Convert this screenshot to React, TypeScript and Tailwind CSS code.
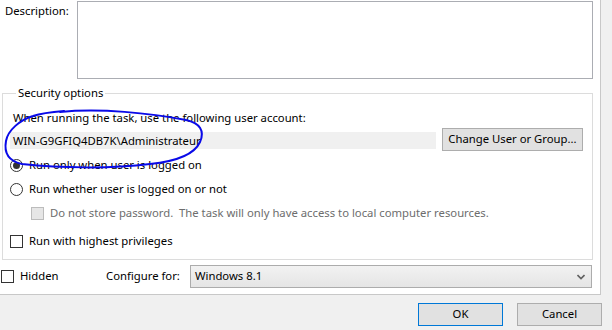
import React from "react";

const font = { fontFamily: '"Noto Sans", "Open Sans", sans-serif' };

const Checkbox = ({ disabled = false }: { disabled?: boolean }) => (
  <div
    className={
      disabled
        ? "w-[13px] h-[13px] shrink-0 border border-[#bcbcbc] bg-[#e6e6e6]"
        : "w-[13px] h-[13px] shrink-0 border border-[#333333] bg-white"
    }
  />
);

const Radio = ({ checked = false }: { checked?: boolean }) => (
  <div className="w-[13px] h-[13px] shrink-0 rounded-full border border-[#333333] bg-white flex items-center justify-center">
    {checked && <div className="w-[7px] h-[7px] rounded-full bg-[#333333]" />}
  </div>
);

export default function App() {
  return (
    <div
      className="w-[612px] h-[330px] bg-[#f0f0f0] flex flex-col text-[11.3px] text-black overflow-hidden"
      style={font}
    >
      {/* Main white panel */}
      <div className="relative w-[601px] h-[295px] bg-white border-r border-b border-[#c8c8c8] flex flex-col">
        {/* Description row */}
        <div className="flex">
          <div className="w-[77px] pl-[5px] pt-[3px] leading-[16px]">Description:</div>
          <div className="w-[516px] h-[78px] mt-[1px] border border-[#abadb3] bg-white" />
        </div>

        {/* Security options group */}
        <fieldset className="ml-[2px] mt-[6px] w-[591px] border border-[#dcdcdc] px-[7px] pb-[10px]">
          <legend className="ml-[6px] px-[2px] leading-[16px]">Security options</legend>

          <div className="mt-[9px] h-[16px] leading-[16px] pl-[3px]">
            When running the task, use the following user account:
          </div>

          <div className="mt-[2px] flex gap-[6px]">
            <div className="w-[426px] h-[17px] mt-[4px] bg-[#f0f0f0] pl-[3px] leading-[17px]">
              WIN-G9GFIQ4DB7K\Administrateur
            </div>
            <div className="w-[141px] h-[23px] border border-[#adadad] bg-[#e1e1e1] flex items-center justify-center">
              Change User or Group...
            </div>
          </div>

          <div className="mt-[6px] h-[16px] flex items-center gap-[6px]">
            <Radio checked />
            <span>Run only when user is logged on</span>
          </div>

          <div className="mt-[8px] h-[16px] flex items-center gap-[6px]">
            <Radio />
            <span>Run whether user is logged on or not</span>
          </div>

          <div className="mt-[8px] h-[16px] flex items-center gap-[6px] pl-[21px] text-[#6d6d6d]">
            <Checkbox disabled />
            <span className="whitespace-pre">
              Do not store password.  The task will only have access to local computer resources.
            </span>
          </div>

          <div className="mt-[12px] h-[16px] flex items-center gap-[6px]">
            <Checkbox />
            <span>Run with highest privileges</span>
          </div>
        </fieldset>

        {/* Hidden / Configure for */}
        <div className="mt-[5px] h-[23px] flex items-center">
          <div className="w-[106px] pl-[1px] flex items-center gap-[6px]">
            <Checkbox />
            <span>Hidden</span>
          </div>
          <div className="w-[84px]">Configure for:</div>
          <div className="w-[402px] h-[23px] border border-[#acacac] bg-gradient-to-b from-[#f2f2f2] to-[#e5e5e5] flex items-center justify-between pl-[4px] pr-[6px]">
            <span>Windows 8.1</span>
            <svg width="8" height="6" viewBox="0 0 8 6">
              <path d="M0.5 1 L4 4.5 L7.5 1" fill="none" stroke="#606060" strokeWidth="1.6" />
            </svg>
          </div>
        </div>

        {/* Hand-drawn annotation */}
        <svg
          className="absolute left-0 top-0 pointer-events-none"
          width="601"
          height="295"
          viewBox="0 0 601 295"
        >
          <path
            d="M60 112 C 100 108, 150 113, 186 120 C 200 123, 205 131, 200 142 C 195 153, 180 161, 150 164 C 110 169, 60 168, 22 164 C 8 161, 4 152, 6 141 C 8 130, 20 120, 33 116 C 42 113, 52 112, 64 111"
            fill="none"
            stroke="#0a0ae8"
            strokeWidth="2"
            strokeLinecap="round"
          />
        </svg>
      </div>

      {/* Dialog buttons */}
      <div className="flex justify-end gap-[14px] pt-[8px] pr-[10px]">
        <div className="w-[85px] h-[23px] border border-[#0078d7] bg-[#e1e1e1] flex items-center justify-center">
          OK
        </div>
        <div className="w-[85px] h-[23px] border border-[#adadad] bg-[#e1e1e1] flex items-center justify-center">
          Cancel
        </div>
      </div>
    </div>
  );
}
